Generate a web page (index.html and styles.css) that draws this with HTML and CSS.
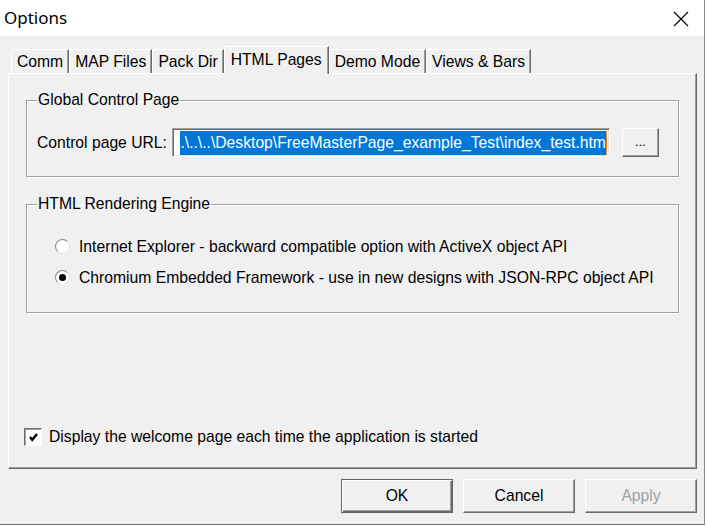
FILE: index.html
```html
<!DOCTYPE html>
<html>
<head>
    <title>Options</title>
    <link rel="stylesheet" href="styles.css">
</head>
<body>
    <div class="window">
        <div class="titlebar">
            <span class="title">Options</span>
            <svg class="close" width="16" height="16" viewBox="0 0 16 16">
                <path d="M1 1 L15 15 M15 1 L1 15" stroke="#000" stroke-width="1.1" fill="none"/>
            </svg>
        </div>
        <div class="client">
            <div class="tabs">
                <div class="tab">Comm</div>
                <div class="tab">MAP Files</div>
                <div class="tab">Pack Dir</div>
                <div class="tab selected">HTML Pages</div>
                <div class="tab">Demo Mode</div>
                <div class="tab">Views &amp; Bars</div>
            </div>
            <div class="panel">
                <fieldset class="group group-url">
                    <legend>Global Control Page</legend>
                    <div class="url-row">
                        <label class="url-label">Control page URL:</label>
                        <div class="edit">
                            <span class="selection">.\..\..\Desktop\FreeMasterPage_example_Test\index_test.htm</span>
                            <span class="caret"></span>
                        </div>
                        <div class="btn browse">...</div>
                    </div>
                </fieldset>
                <fieldset class="group group-engine">
                    <legend>HTML Rendering Engine</legend>
                    <div class="option">
                        <span class="radio"></span>
                        Internet Explorer - backward compatible option with ActiveX object API
                    </div>
                    <div class="option">
                        <span class="radio checked"></span>
                        Chromium Embedded Framework - use in new designs with JSON-RPC object API
                    </div>
                </fieldset>
                <div class="check-row">
                    <span class="checkbox">
                        <svg width="11" height="11" viewBox="0 0 11 11">
                            <path d="M2 5 L4.2 7.8 L9 2" stroke="#000" stroke-width="2.4" fill="none"/>
                        </svg>
                    </span>
                    Display the welcome page each time the application is started
                </div>
            </div>
            <div class="buttons">
                <div class="btn dialog-btn default">OK</div>
                <div class="btn dialog-btn">Cancel</div>
                <div class="btn dialog-btn disabled">Apply</div>
            </div>
        </div>
    </div>
</body>
</html>
```

FILE: styles.css
```css
body {
    margin: 0;
    background-color: #ffffff;
    font-family: "Liberation Sans", Arial, sans-serif;
    font-size: 15.7px;
    color: #000;
}
.window {
    width: 704px;
    height: 524px;
    border-right: 1px solid #8a8a8a;
    border-bottom: 1px solid #6d6d6d;
    display: flex;
    flex-direction: column;
}
.titlebar {
    height: 36px;
    background-color: #ffffff;
    display: flex;
    align-items: center;
    justify-content: space-between;
    padding: 0 15px 0 4px;
    flex-shrink: 0;
}
.title {
    font-family: "Noto Sans", sans-serif;
    font-size: 17px;
    padding-bottom: 1px;
}
.close {
    margin-top: 1px;
}
.client {
    flex: 1;
    background-color: #f0f0f0;
    padding: 10px 7px 0 8px;
}
.tabs {
    display: flex;
    align-items: flex-end;
    height: 27px;
    padding-left: 3px;
}
.tab {
    height: 24px;
    line-height: 24px;
    padding: 0 5px 0 5px;
    border-top: 1px solid #fff;
    border-left: 1px solid #fff;
    border-right: 1px solid #696969;
    box-shadow: inset -1px 0 #a0a0a0;
    box-sizing: border-box;
}
.tab.selected {
    height: 28px;
    line-height: 26px;
    margin-bottom: -1px;
    padding: 0 6px;
    background-color: #f0f0f0;
    position: relative;
    z-index: 1;
}
.panel {
    height: 396px;
    box-sizing: border-box;
    border-top: 1px solid #fff;
    border-left: 1px solid #fff;
    border-right: 1px solid #696969;
    border-bottom: 1px solid #696969;
    box-shadow: inset -1px -1px #a0a0a0;
    padding: 17px 17px 0 17px;
    display: flex;
    flex-direction: column;
}
.group {
    margin: 0;
    border: 1px solid #a0a0a0;
    box-shadow: inset 1px 1px #fff, 1px 1px #fff;
    padding: 0 10px;
}
.group legend {
    padding: 0 1px;
    line-height: 18px;
}
.group-url {
    padding-top: 19px;
    padding-bottom: 19px;
}
.url-row {
    display: flex;
    align-items: center;
}
.url-label {
    margin-right: 5px;
}
.edit {
    width: 438px;
    height: 29px;
    box-sizing: border-box;
    border-top: 1px solid #a0a0a0;
    border-left: 1px solid #a0a0a0;
    border-right: 1px solid #fff;
    border-bottom: 1px solid #fff;
    box-shadow: inset 1px 1px #696969, inset -1px -1px #e3e3e3;
    background-color: #fff;
    display: flex;
    justify-content: flex-end;
    align-items: center;
    overflow: hidden;
    padding: 0 2px;
}
.selection {
    background-color: #0078d7;
    color: #fff;
    white-space: nowrap;
    line-height: 24px;
}
.caret {
    width: 1px;
    height: 24px;
    background-color: #e08a2c;
    flex-shrink: 0;
}
.btn {
    background-color: #f0f0f0;
    border-top: 1px solid #fff;
    border-left: 1px solid #fff;
    border-right: 1px solid #696969;
    border-bottom: 1px solid #696969;
    box-shadow: inset -1px -1px #a0a0a0;
    box-sizing: border-box;
    display: flex;
    align-items: center;
    justify-content: center;
}
.browse {
    width: 37px;
    height: 29px;
    margin-left: 12px;
    font-size: 13px;
    padding-bottom: 3px;
}
.group-engine {
    margin-top: 18px;
    padding-top: 18px;
    padding-bottom: 19px;
}
.option {
    display: flex;
    align-items: center;
    height: 31px;
    margin-left: 18px;
}
.radio {
    width: 15px;
    height: 15px;
    box-sizing: border-box;
    border-radius: 50%;
    border: 1px solid;
    border-color: #8a8a8a #e3e3e3 #e3e3e3 #8a8a8a;
    background-color: #fff;
    margin-right: 9px;
    display: flex;
    align-items: center;
    justify-content: center;
}
.radio.checked::after {
    content: "";
    width: 7px;
    height: 7px;
    border-radius: 50%;
    background-color: #000;
}
.check-row {
    margin-top: auto;
    margin-bottom: 22px;
    margin-left: -2px;
    display: flex;
    align-items: center;
}
.checkbox {
    width: 18px;
    height: 18px;
    box-sizing: border-box;
    border-top: 1px solid #6d6d6d;
    border-left: 1px solid #6d6d6d;
    border-right: 1px solid #fff;
    border-bottom: 1px solid #fff;
    box-shadow: inset 1px 1px #a0a0a0;
    background-color: #fff;
    margin-right: 7px;
    display: flex;
    align-items: center;
    justify-content: center;
}
.buttons {
    display: flex;
    justify-content: flex-end;
    gap: 10px;
    margin-top: 10px;
}
.dialog-btn {
    width: 112px;
    height: 34px;
}
.dialog-btn.default {
    border: 1px solid #646464;
    box-shadow: inset 1px 1px #fff, inset -1px -1px #696969, inset -2px -2px #a0a0a0;
}
.dialog-btn.disabled {
    color: #a0a0a0;
}
```
